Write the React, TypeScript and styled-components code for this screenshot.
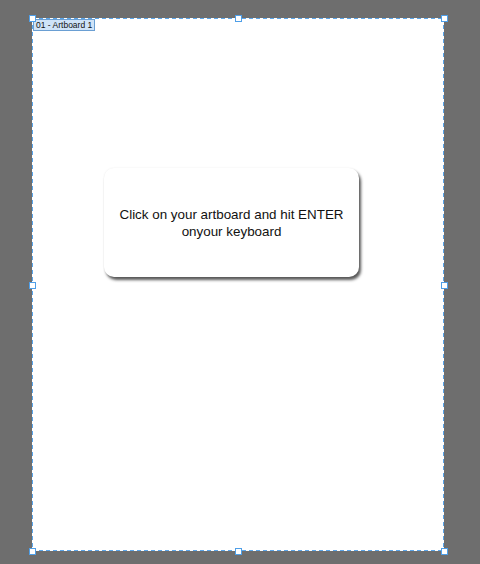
import styled, { createGlobalStyle } from "styled-components";

const GlobalStyle = createGlobalStyle`
  html, body {
    margin: 0;
    padding: 0;
    background: #6e6e6e;
  }
  body {
    font-family: "Liberation Sans", Arial, sans-serif;
  }
`;

const Canvas = styled.div`
  width: 480px;
  height: 564px;
  box-sizing: border-box;
  padding: 18px 0 0 32px;
  background: #6e6e6e;
  overflow: hidden;
`;

// dashed selection outline drawn with gradients (longer dashes than border: dashed)
const Artboard = styled.div`
  --dash: #5aa5ea;
  position: relative;
  width: 412px;
  height: 533px;
  box-sizing: border-box;
  background: #ffffff;
  padding: 150px 0 0 72px;
  &::before {
    content: "";
    position: absolute;
    inset: 0;
    pointer-events: none;
    background:
      repeating-linear-gradient(90deg, var(--dash) 0 4px, transparent 4px 7px) top / 100% 1px no-repeat,
      repeating-linear-gradient(90deg, var(--dash) 0 4px, transparent 4px 7px) bottom / 100% 1px no-repeat,
      repeating-linear-gradient(180deg, var(--dash) 0 4px, transparent 4px 7px) left / 1px 100% no-repeat,
      repeating-linear-gradient(180deg, var(--dash) 0 4px, transparent 4px 7px) right / 1px 100% no-repeat;
  }
`;

const Label = styled.div`
  position: absolute;
  top: 1px;
  left: 1px;
  height: 12px;
  padding: 0 2px;
  box-sizing: border-box;
  background: #cfe3f7;
  border: 1px solid #6a9fd3;
  font-size: 8.5px;
  line-height: 10px;
  color: #111;
  white-space: nowrap;
`;

const Handle = styled.div<{ $x: string; $y: string }>`
  position: absolute;
  left: ${(p) => p.$x};
  top: ${(p) => p.$y};
  width: 5px;
  height: 5px;
  margin: -3px 0 0 -3px;
  background: #fff;
  border: 1px solid #4f9fe8;
  box-sizing: content-box;
`;

const Card = styled.div`
  width: 255px;
  height: 109px;
  box-sizing: border-box;
  border-radius: 10px;
  background: #fff;
  box-shadow: 2px 3px 3px rgba(0, 0, 0, 0.65), 0 0 2px rgba(0, 0, 0, 0.08);
  display: flex;
  align-items: center;
  justify-content: center;
  text-align: center;
`;

const Message = styled.p`
  margin: 0;
  font-size: 13.4px;
  line-height: 17px;
  color: #111;
`;

const handles = [
  ["0%", "0%"],
  ["50%", "0%"],
  ["100%", "0%"],
  ["0%", "50%"],
  ["100%", "50%"],
  ["0%", "100%"],
  ["50%", "100%"],
  ["100%", "100%"],
];

export default function App() {
  return (
    <>
      <GlobalStyle />
      <Canvas>
        <Artboard>
          <Card>
            <Message>
              Click on your artboard and hit ENTER
              <br />
              onyour keyboard
            </Message>
          </Card>
          <Label>01 - Artboard 1</Label>
          {handles.map(([x, y]) => (
            <Handle key={x + y} $x={x} $y={y} />
          ))}
        </Artboard>
      </Canvas>
    </>
  );
}
